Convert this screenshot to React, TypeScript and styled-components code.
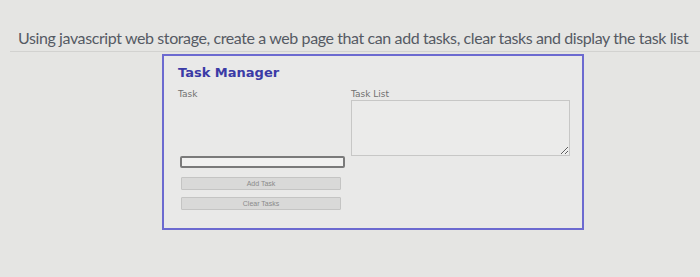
import React from "react";
import styled, { createGlobalStyle } from "styled-components";

const GlobalStyle = createGlobalStyle`
  html, body {
    margin: 0;
    padding: 0;
    background: #e5e5e3;
  }
`;

const App = () => {
  return (
    <>
      <GlobalStyle />
      <PageStyle>
        <QuestionStyle>
          Using javascript web storage, create a web page that can add tasks,
          clear tasks and display the task list
        </QuestionStyle>
        <CardStyle>
          <TitleStyle>Task Manager</TitleStyle>
          <ColumnsStyle>
            <LeftColumn>
              <LabelStyle>Task</LabelStyle>
              <TaskInput type="text" />
              <ActionButton type="button">Add Task</ActionButton>
              <ActionButton type="button">Clear Tasks</ActionButton>
            </LeftColumn>
            <RightColumn>
              <LabelStyle>Task List</LabelStyle>
              <TaskList readOnly />
            </RightColumn>
          </ColumnsStyle>
        </CardStyle>
      </PageStyle>
    </>
  );
};

const PageStyle = styled.div`
  width: 700px;
  height: 277px;
  padding-top: 27px;
  box-sizing: border-box;
  overflow: hidden;
`;

const QuestionStyle = styled.div`
  margin: 0 0 0 10px;
  padding: 0 0 3px 8px;

  font-family: Lato, "Open Sans", sans-serif;
  font-size: 16px;
  letter-spacing: -0.4px;
  line-height: 21px;
  color: #555a63;
  white-space: nowrap;

  border-bottom: 1px solid #d2d2d0;
`;

const CardStyle = styled.div`
  width: 422px;
  height: 176px;
  margin: 2px 0 0 162px;
  padding: 8px 0 0 14px;
  box-sizing: border-box;

  background: #e9e9e8;
  border: 2px solid #6c6ad0;
`;

const TitleStyle = styled.div`
  font-family: "DejaVu Sans", Verdana, sans-serif;
  font-size: 13px;
  font-weight: 700;
  line-height: 18px;
  color: #3b3ba6;
`;

const ColumnsStyle = styled.div`
  display: grid;
  grid-template-columns: 168px 220px;
  column-gap: 5px;
  margin-top: 6px;
`;

const LeftColumn = styled.div`
  display: flex;
  flex-direction: column;
`;

const RightColumn = styled.div`
  display: flex;
  flex-direction: column;
`;

const LabelStyle = styled.div`
  font-family: "DejaVu Sans", Verdana, sans-serif;
  font-size: 9px;
  line-height: 12px;
  color: #707070;
`;

const TaskInput = styled.input`
  width: 165px;
  height: 12px;
  margin: 56px 0 0 2px;
  padding: 0;
  box-sizing: border-box;

  background: #f1f1f0;
  border: 2px solid #7a7a7a;
  border-radius: 2px;
  outline: none;
`;

const ActionButton = styled.button`
  width: 160px;
  height: 13px;
  margin: 9px 0 0 3px;
  padding: 0;
  box-sizing: border-box;

  font-family: "Liberation Sans", Arial, sans-serif;
  font-size: 7px;
  line-height: 11px;
  color: #8a8a8a;

  background: #d9d9d8;
  border: 1px solid #c4c4c3;
  border-radius: 1px;

  & + & {
    margin-top: 7px;
  }
`;

const TaskList = styled.textarea`
  width: 219px;
  height: 56px;
  margin-top: 0;
  padding: 0;
  box-sizing: border-box;

  background: #ebebea;
  border: 1px solid #c7c7c6;
  resize: both;
  outline: none;
`;

export default App;
